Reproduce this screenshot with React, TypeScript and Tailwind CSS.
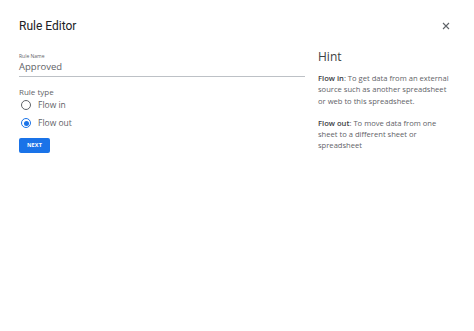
import React from "react";

function Radio({ checked, label }: { checked?: boolean; label: string }) {
  return (
    <label className="flex items-center gap-[7px] h-[18px]">
      <span
        className={
          "w-[10px] h-[10px] rounded-full border flex items-center justify-center " +
          (checked ? "border-[#1a73e8]" : "border-[#5f6368]")
        }
      >
        {checked && <span className="w-[5px] h-[5px] rounded-full bg-[#1a73e8]" />}
      </span>
      <span className="text-[8.5px] text-[#5f6368]">{label}</span>
    </label>
  );
}

export default function App() {
  return (
    <div
      className="w-[474px] h-[331px] bg-white relative"
      style={{ fontFamily: '"Open Sans", Roboto, sans-serif' }}
    >
      {/* Header */}
      <div className="flex items-center justify-between pl-[19px] pr-[24px] pt-[16px] h-[36px]">
        <h1
          className="text-[12px] text-[#202124]"
          style={{ fontFamily: "Roboto, sans-serif" }}
        >
          Rule Editor
        </h1>
        <span className="text-[#5f6368]">
          <svg width="8" height="8" viewBox="0 0 8 8">
            <path d="M1 1 L7 7 M7 1 L1 7" stroke="currentColor" strokeWidth="1.1" />
          </svg>
        </span>
      </div>

      <div className="flex pl-[19px] pt-[17px]">
        {/* Left column */}
        <div className="w-[286px]">
          <div className="border-b border-[#bdc1c6] pb-[2px]">
            <div className="text-[5px] leading-[6px] text-[#5f6368]">Rule Name</div>
            <div className="text-[9.5px] leading-[15px] text-[#5f6368]">Approved</div>
          </div>
          <div className="mt-[11px] text-[8px] leading-[8px] text-[#5f6368]">Rule type</div>
          <div className="flex flex-col pl-[2px]">
            <Radio label="Flow in" />
            <Radio checked label="Flow out" />
          </div>
          <button className="block mt-[6px] w-[31px] h-[15px] rounded-[2px] bg-[#1a73e8] text-white text-[5.5px] font-bold tracking-[0.2px]">
            NEXT
          </button>
        </div>

        {/* Right column */}
        <div className="ml-[13px] w-[134px] -mt-[3px]">
          <h2 className="text-[12px] leading-[14px] text-[#3c4043]">Hint</h2>
          <p className="mt-[9px] text-[7.6px] leading-[11.3px] text-[#5f6368]">
            <span className="font-semibold text-[#3c4043]">Flow in</span>: To get data from an external source such as another spreadsheet or web to this spreadsheet.
          </p>
          <p className="mt-[11px] text-[7.6px] leading-[11.3px] text-[#5f6368]">
            <span className="font-semibold text-[#3c4043]">Flow out</span>: To move data from one sheet to a different sheet or spreadsheet
          </p>
        </div>
      </div>
    </div>
  );
}
